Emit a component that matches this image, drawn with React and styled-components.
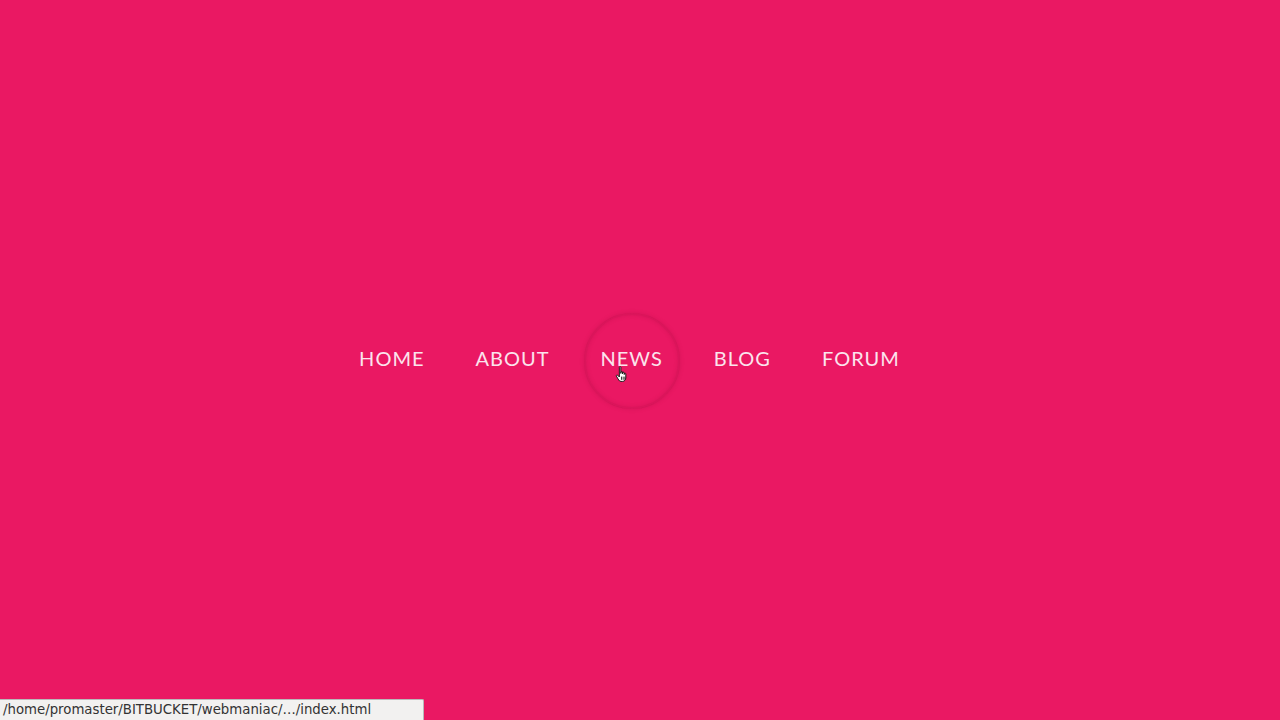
import React from 'react';
import styled, { createGlobalStyle } from 'styled-components';

const GlobalStyle = createGlobalStyle`
  html, body {
    margin: 0;
    padding: 0;
    height: 100%;
    background: #ea1863;
  }
  #root {
    height: 100%;
  }
`;

const items = ['Home', 'About', 'News', 'Blog', 'Forum'];

const Page = styled.div`
  position: relative;
  height: 720px;
  display: flex;
  align-items: center;
  justify-content: center;
  background: #ea1863;
  font-family: Lato, "Open Sans", sans-serif;
  overflow: hidden;
`;

const Menu = styled.ul`
  display: flex;
  align-items: center;
  list-style: none;
  margin: 0 21px 4px 0;
  padding: 0;
`;

const Item = styled.li`
  position: relative;
  padding: 0 25.5px;
  display: flex;
  align-items: center;
  justify-content: center;
`;

const Link = styled.a`
  position: relative;
  z-index: 1;
  font-size: 20px;
  letter-spacing: 1px;
  text-transform: uppercase;
  color: #fbe4ed;
  text-decoration: none;
  line-height: 24px;
`;

const Ring = styled.span`
  position: absolute;
  left: 50%;
  top: 50%;
  width: 92px;
  height: 92px;
  margin: -45px 0 0 -48px;
  border-radius: 50%;
  border: 2px solid rgba(160, 10, 60, 0.2);
  box-shadow: 0 0 4px rgba(150, 10, 55, 0.25), inset 0 0 4px rgba(150, 10, 55, 0.2);
`;

const Cursor = styled.svg`
  position: absolute;
  left: 40px;
  top: 20px;
  width: 14px;
  height: 17px;
  z-index: 2;
`;

const StatusBar = styled.div`
  position: absolute;
  left: 0;
  bottom: 0;
  width: 424px;
  height: 21px;
  background: #f2f1f0;
  border: 1px solid #b9b9b9;
  border-left: none;
  border-bottom: none;
  border-top-right-radius: 2px;
  font-family: "DejaVu Sans", "Liberation Sans", sans-serif;
  font-size: 13.3px;
  line-height: 19px;
  color: #333;
  padding-left: 3px;
  box-sizing: border-box;
  white-space: nowrap;
`;

const HandCursor = () => (
  <Cursor viewBox="0 0 13 16">
    <path
      d="M4 1.2c0-.7 1.4-.7 1.4 0V7l.2-1.3c.1-.7 1.4-.7 1.4 0V7.4l.2-1.1c.1-.7 1.4-.6 1.4.1V8l.2-.8c.2-.6 1.3-.5 1.3.2v3.8c0 1.6-1.2 3.3-3 3.3H5.6c-1 0-1.7-.5-2.2-1.3L1.2 9.5c-.4-.7.6-1.4 1.2-.8L4 10.3Z"
      fill="#fff"
      stroke="#111"
      strokeWidth="0.9"
      strokeLinejoin="round"
    />
    <path d="M6 10v3M7.6 10v3M9.2 10v3" stroke="#111" strokeWidth="0.8" />
  </Cursor>
);

const App = () => (
  <Page>
    <GlobalStyle />
    <Menu>
      {items.map((label) => (
        <Item key={label}>
          {label === 'News' && <Ring />}
          <Link href="#">{label}</Link>
          {label === 'News' && <HandCursor />}
        </Item>
      ))}
    </Menu>
    <StatusBar>/home/promaster/BITBUCKET/webmaniac/…/index.html</StatusBar>
  </Page>
);

export default App;
